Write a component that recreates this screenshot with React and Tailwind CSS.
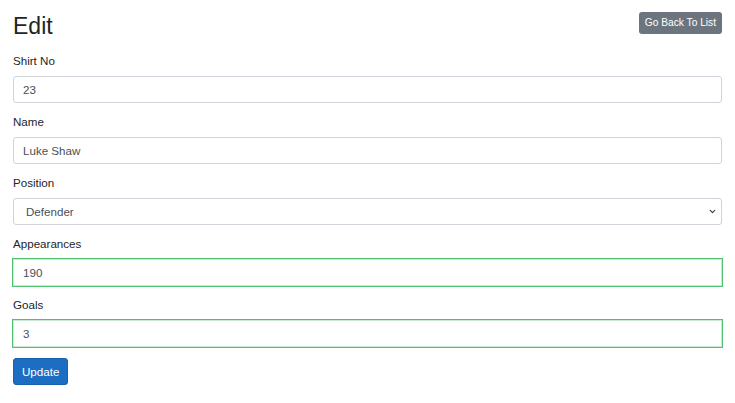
import { ChevronDown } from 'lucide-react';

const fields = [
  { label: 'Shirt No', value: '23' },
  { label: 'Name', value: 'Luke Shaw' },
  { label: 'Position', value: 'Defender', select: true },
  { label: 'Appearances', value: '190', valid: true },
  { label: 'Goals', value: '3', valid: true },
];

function Field({ label, value, select, valid }) {
  return (
    <div className="mb-[10px]">
      <label className="block text-[11.6px] leading-[17px] text-[#212529] mb-[7px]">{label}</label>
      {select ? (
        <div className="relative">
          <select
            defaultValue={value}
            className="w-full h-[27px] appearance-none rounded-[3px] border border-[#ced4da] bg-white pl-[12px] text-[11.6px] text-[#495057] outline-none"
          >
            <option>Goalkeeper</option>
            <option>Defender</option>
            <option>Midfielder</option>
            <option>Forward</option>
          </select>
          <ChevronDown className="pointer-events-none absolute right-[5px] top-[9px] w-[9px] h-[9px] text-[#444]" strokeWidth={3.5} />
        </div>
      ) : (
        <input
          defaultValue={value}
          className={`block w-full h-[27px] rounded-[3px] border bg-white px-[9px] text-[11.6px] text-[#495057] outline-none ${
            valid ? 'border-[#c9ead2] ring-1 ring-[#4fc26f] rounded-none' : 'border-[#ced4da]'
          }`}
        />
      )}
    </div>
  );
}

export default function App() {
  return (
    <div className="min-h-screen bg-white px-[13px] pt-[11px]" style={{ fontFamily: '"Liberation Sans", Arial, sans-serif' }}>
      <div className="flex items-start justify-between mb-[11px]">
        <h2 className="text-[23px] leading-[30px] text-[#212529]">Edit</h2>
        <button className="mt-[1px] h-[22px] rounded-[3px] bg-[#6c757d] px-[6px] text-[10.2px] text-white">
          Go Back To List
        </button>
      </div>
      <form onSubmit={(e) => e.preventDefault()}>
        {fields.map((f) => (
          <Field key={f.label} {...f} />
        ))}
        <button
          type="submit"
          className="mt-[1px] h-[27px] rounded-[3px] border border-[#1861ac] bg-[#1b6ec2] px-[8px] text-[11.6px] text-white"
        >
          Update
        </button>
      </form>
    </div>
  );
}
